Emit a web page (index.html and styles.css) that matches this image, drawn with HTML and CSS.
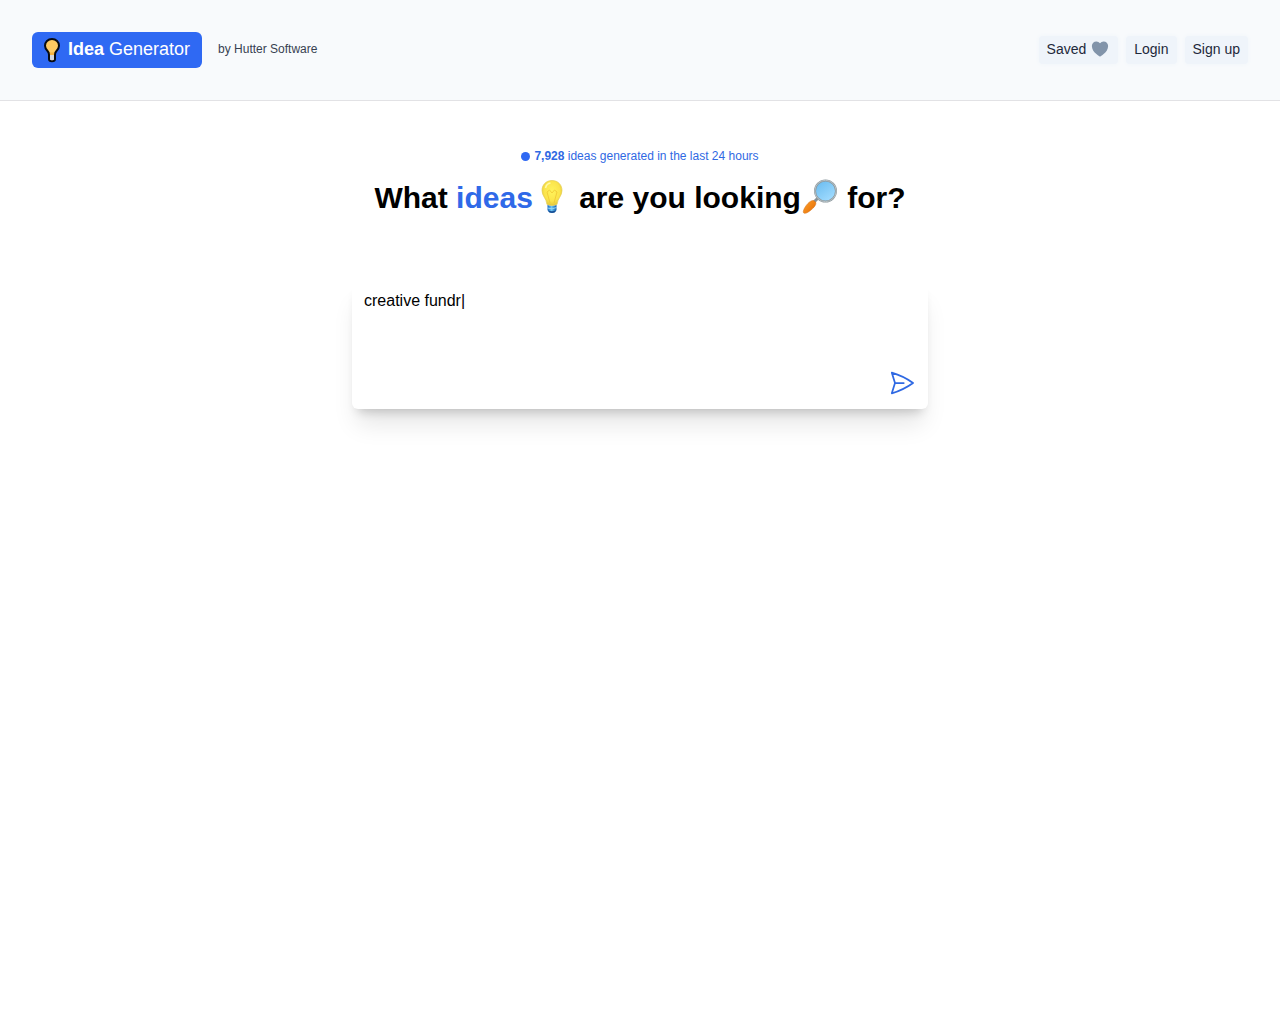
FILE: index.html
```html
<!DOCTYPE html>
<html lang="en">
<head>
<meta charset="utf-8">
<meta name="viewport" content="width=device-width, initial-scale=1">
<title>Idea Generator</title>
<link rel="stylesheet" href="styles.css">
</head>
<body>
<header class="site-header">
  <div class="brand">
    <a class="logo" href="#">
      <svg class="logo-bulb" viewBox="0 0 17 26" aria-hidden="true">
        <path d="M8 2C3.900 2 1 5 1 8.800C1 11.500 2.400 13 3.700 14.300C4.700 15.300 5 16.300 5 17.800V22C5 23.600 6.300 24.300 8 24.300S11 23.600 11 22V17.800C11 16.300 11.300 15.300 12.300 14.300C13.600 13 15 11.500 15 8.800C15 5 12.100 2 8 2Z" fill="#fdca62" stroke="#080b12" stroke-width="2"/>
        <path d="M6 18h4v4q0 1.300-2 1.300t-2-1.300z" fill="#d5d7dc"/>
        <path d="M6 15.500h4V18H6z" fill="#f7b23e"/>
      </svg>
      <span><strong>Idea</strong> Generator</span>
    </a>
    <a class="byline" href="#">by Hutter Software</a>
  </div>
  <nav class="actions" aria-label="Account">
    <button class="action" type="button">Saved
      <svg class="heart" viewBox="0 0 24 24" aria-hidden="true"><path d="M11.645 20.910l-.007-.003-.022-.012a15.247 15.247 0 0 1-.383-.218 25.180 25.180 0 0 1-4.244-3.170C4.688 15.360 2.250 12.174 2.250 8.250 2.250 5.322 4.714 3 7.688 3A5.500 5.500 0 0 1 12 5.052 5.500 5.500 0 0 1 16.313 3c2.973 0 5.437 2.322 5.437 5.250 0 3.925-2.438 7.111-4.739 9.256a25.175 25.175 0 0 1-4.244 3.170 15.247 15.247 0 0 1-.383.219l-.022.012-.007.004-.003.001a.752.752 0 0 1-.704 0l-.003-.001Z"/></svg>
    </button>
    <button class="action" type="button">Login</button>
    <button class="action" type="button">Sign up</button>
  </nav>
</header>
<main class="hero">
  <p class="stats"><span class="dot"></span><span><strong>7,928</strong> ideas generated in the last 24 hours</span></p>
  <h1 class="title">What <span class="accent">ideas</span><svg class="emoji" viewBox="0 0 38 36" role="img" aria-label="light bulb">
      <defs>
        <radialGradient id="glass" cx=".5" cy=".42" r=".6"><stop offset="0" stop-color="#fff35b"/><stop offset=".65" stop-color="#fbe44b"/><stop offset="1" stop-color="#dfc33a"/></radialGradient>
        <linearGradient id="cap"><stop offset="0" stop-color="#1665bd"/><stop offset=".45" stop-color="#6ec5f4"/><stop offset="1" stop-color="#115cac"/></linearGradient>
      </defs>
      <path d="M19 1.500C12.800 1.500 9 6 9 11.500C9 17 13.300 19 14 25.500Q19 28 24 25.500C24.700 19 29 17 29 11.500C29 6 25.200 1.500 19 1.500Z" fill="url(#glass)" stroke="#e5cf55" stroke-width=".7"/>
      <path d="M17 24L14 13l2.500-2 2.500 3 2.500-3 2.500 2L21 24" fill="none" stroke="#efc534" stroke-width=".8"/>
      <path d="M12.500 9q1-4.500 5-5" fill="none" stroke="#fff9a6" stroke-width="1.500"/>
      <path d="M14.500 26Q19 28 23.500 26v5q-1 3-4.500 3t-4.500-3z" fill="url(#cap)"/>
      <path d="M14.500 29q4.500 2 9-.5" fill="none" stroke="#a7e4ff" stroke-width=".8"/>
      <path d="M15 31.500q4 1.500 8 0-1 2.500-4 2.500t-4-2.500" fill="#164b91"/>
    </svg> are you looking<svg class="emoji" viewBox="0 0 38 36" role="img" aria-label="magnifying glass">
      <defs>
        <linearGradient id="lens" x2=".7" y2="1"><stop offset="0" stop-color="#65b9ee"/><stop offset="1" stop-color="#a2dcff"/></linearGradient>
        <linearGradient id="handle" y2=".8"><stop offset="0" stop-color="#ffa12b"/><stop offset="1" stop-color="#e56f08"/></linearGradient>
      </defs>
      <path d="M17 19l-4 4" stroke="#889197" stroke-width="3"/>
      <path d="M12.500 21.500C9 21 4 27 2.500 31.500C1.500 34.500 4 35 6.500 33.500C10.500 31 16.500 26 14.500 23Z" fill="url(#handle)" stroke="#d06c12" stroke-width=".5"/>
      <circle cx="24.500" cy="12" r="10.500" fill="url(#lens)" stroke="#8c989e" stroke-width="2"/>
      <circle cx="24.500" cy="12" r="10.700" fill="none" stroke="#c1cacd" stroke-width=".8"/>
    </svg> for?</h1>
  <form class="prompt">
    <textarea class="prompt-text" aria-label="What ideas are you looking for?" spellcheck="false">creative fundr|</textarea>
    <button class="send" type="button" aria-label="Generate ideas">
      <svg class="send-icon" viewBox="0 0 24 24" aria-hidden="true"><path d="M6 12L3.269 3.126A59.768 59.768 0 0 1 21.485 12 59.770 59.770 0 0 1 3.270 20.876L5.999 12zm0 0h7.500"/></svg>
    </button>
  </form>
</main>
</body>
</html>
```
FILE: styles.css
```css
* { box-sizing: border-box; }

body {
  margin: 0;
  background: #fff;
  color: #000;
  font: 16px/24px "Liberation Sans", Arial, sans-serif;
}

button, textarea { font: inherit; color: inherit; }
a { color: inherit; text-decoration: none; }

.site-header {
  display: flex;
  justify-content: space-between;
  align-items: center;
  padding: 32px;
  background: #f8fafc;
  border-bottom: 1px solid #e2e2e5;
}

.brand { display: flex; align-items: center; gap: 16px; }

.logo {
  display: flex;
  align-items: center;
  gap: 7px;
  height: 36px;
  padding: 0 12px 2px;
  border-radius: 6px;
  background: #2f69f3;
  color: #fff;
  font-size: 18px;
}

.logo-bulb { width: 17px; height: 26px; margin-top: 2px; }

.byline { font-size: 12px; line-height: 16px; padding-bottom: 2px; color: #374151; }

.actions { display: flex; gap: 8px; }

.action {
  display: flex;
  align-items: center;
  gap: 4px;
  height: 28px;
  padding: 0 8px 2px;
  border: 0;
  border-radius: 4px;
  background: #eff4fa;
  box-shadow: 0 0 4px #eff4fa;
  color: #1e293b;
  font-size: 14px;
  line-height: 20px;
  cursor: pointer;
}

.heart { width: 20px; height: 20px; fill: #8294aa; }

.hero {
  display: flex;
  flex-direction: column;
  align-items: center;
  padding: 48px 16px;
}

.stats {
  display: flex;
  align-items: center;
  gap: 4px;
  margin: 0;
  color: #2f69e3;
  font-size: 12px;
  line-height: 14px;
}

.dot { width: 9px; height: 9px; border-radius: 50%; background: #2f69f3; }

.title {
  margin: 12px 0 0;
  font-size: 30px;
  line-height: 46px;
  text-align: center;
}

.accent { color: #2f69e8; }

.emoji { width: 38px; height: 36px; vertical-align: -7px; }

.prompt {
  display: flex;
  flex-direction: column;
  width: 100%;
  max-width: 576px;
  margin-top: 60px;
  padding: 8px 12px 12px;
  border-radius: 6px;
  background: #fff;
  box-shadow: 0 20px 25px -5px rgb(0 0 0 / 10%), 0 8px 10px -6px rgb(0 0 0 / 20%);
}

.prompt-text {
  height: 80px;
  padding: 0;
  border: 0;
  outline: 0;
  resize: none;
  background: transparent;
}

.send {
  display: flex;
  align-self: flex-end;
  padding: 0;
  border: 0;
  background: none;
  cursor: pointer;
}

.send-icon {
  width: 28px;
  height: 28px;
  fill: none;
  stroke: #2f69e3;
  stroke-width: 1.500;
  stroke-linecap: round;
  stroke-linejoin: round;
}
```
